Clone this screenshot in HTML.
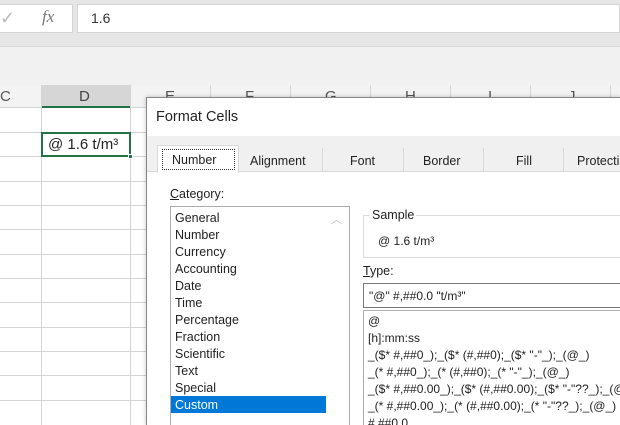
<!DOCTYPE html>
<html><head><style>
*{margin:0;padding:0;box-sizing:border-box}
html,body{width:620px;height:425px;overflow:hidden}
body{background:#fff;font-family:"Liberation Sans",sans-serif;color:#222}
#w{position:relative;width:620px;height:425px;overflow:hidden}
.a{position:absolute}
.t{font-size:12.5px;white-space:nowrap}
</style></head><body><div id="w">
<div class="a" style="left:0;top:0;width:620px;height:46px;background:#e6e6e6"></div>
<div class="a" style="left:0;top:46px;width:620px;height:39px;background:#f1f1f1;border-top:1px solid #d8d8d8"></div>
<div class="a" style="left:0;top:4px;width:73px;height:29px;background:#fff;border:1px solid #d4d4d4;border-left:none"></div>
<div class="a" style="left:0;top:8px;font-size:18px;color:#bbb">✓</div>
<div class="a" style="left:42px;top:7px;font-family:'Liberation Serif',serif;font-style:italic;font-size:17px;color:#777">fx</div>
<div class="a" style="left:77px;top:4px;width:543px;height:29px;background:#fff;border:1px solid #d4d4d4"></div>
<div class="a" style="left:91px;top:10px;font-size:14px;color:#333">1.6</div>
<div class="a" style="left:0;top:85px;width:620px;height:23px;background:#f3f3f3;border-bottom:1px solid #d4d4d4"></div>
<div class="a" style="left:41px;top:85px;width:89px;height:23px;background:#d6d6d6;border-bottom:2px solid #217346"></div>
<div class="a" style="left:0;top:88px;font-size:15px;color:#555">C</div>
<div class="a" style="left:79px;top:88px;font-size:15px;color:#444">D</div>
<div class="a" style="left:165px;top:88px;font-size:15px;color:#555">E</div>
<div class="a" style="left:245px;top:88px;font-size:15px;color:#555">F</div>
<div class="a" style="left:325px;top:88px;font-size:15px;color:#555">G</div>
<div class="a" style="left:405px;top:88px;font-size:15px;color:#555">H</div>
<div class="a" style="left:488px;top:88px;font-size:15px;color:#555">I</div>
<div class="a" style="left:568px;top:88px;font-size:15px;color:#555">J</div>
<div class="a" style="left:41px;top:85px;width:1px;height:340px;background:#d4d4d4"></div>
<div class="a" style="left:130px;top:85px;width:1px;height:340px;background:#d4d4d4"></div>
<div class="a" style="left:210px;top:85px;width:1px;height:12px;background:#d4d4d4"></div>
<div class="a" style="left:290px;top:85px;width:1px;height:12px;background:#d4d4d4"></div>
<div class="a" style="left:370px;top:85px;width:1px;height:12px;background:#d4d4d4"></div>
<div class="a" style="left:450px;top:85px;width:1px;height:12px;background:#d4d4d4"></div>
<div class="a" style="left:530px;top:85px;width:1px;height:12px;background:#d4d4d4"></div>
<div class="a" style="left:610px;top:85px;width:1px;height:12px;background:#d4d4d4"></div>
<div class="a" style="left:0;top:132px;width:146px;height:1px;background:#d4d4d4"></div>
<div class="a" style="left:0;top:156px;width:146px;height:1px;background:#d4d4d4"></div>
<div class="a" style="left:0;top:181px;width:146px;height:1px;background:#d4d4d4"></div>
<div class="a" style="left:0;top:205px;width:146px;height:1px;background:#d4d4d4"></div>
<div class="a" style="left:0;top:229px;width:146px;height:1px;background:#d4d4d4"></div>
<div class="a" style="left:0;top:254px;width:146px;height:1px;background:#d4d4d4"></div>
<div class="a" style="left:0;top:278px;width:146px;height:1px;background:#d4d4d4"></div>
<div class="a" style="left:0;top:302px;width:146px;height:1px;background:#d4d4d4"></div>
<div class="a" style="left:0;top:327px;width:146px;height:1px;background:#d4d4d4"></div>
<div class="a" style="left:0;top:351px;width:146px;height:1px;background:#d4d4d4"></div>
<div class="a" style="left:0;top:375px;width:146px;height:1px;background:#d4d4d4"></div>
<div class="a" style="left:0;top:400px;width:146px;height:1px;background:#d4d4d4"></div>
<div class="a" style="left:41px;top:132px;width:90px;height:25px;border:2px solid #217346;background:#fff"></div>
<div class="a" style="left:128px;top:154px;width:5px;height:5px;background:#217346;border:1px solid #fff"></div>
<div class="a" style="left:48px;top:136px;font-size:15px;color:#222">@ 1.6 t/m³</div>
<div class="a" style="left:146px;top:97px;width:474px;height:328px;background:#fff;border:1px solid #888;border-right:none;border-bottom:none;box-shadow:0 0 4px rgba(0,0,0,.25)"></div>
<div class="a" style="left:156px;top:109px;font-size:14.5px;color:#222">Format Cells</div>
<div class="a" style="left:147px;top:136px;width:473px;height:36px;background:#f0f0f0"></div>
<div class="a" style="left:147px;top:171px;width:473px;height:1px;background:#d9d9d9"></div>
<div class="a" style="left:157px;top:145px;width:82px;height:28px;background:#fff;border:1px solid #d9d9d9;border-bottom:none"></div>
<div class="a" style="left:162px;top:149px;width:73px;height:21px;border:1px dotted #333"></div>
<div class="a t" style="left:172px;top:153px">Number</div>
<div class="a" style="left:322px;top:148px;width:1px;height:23px;background:#d9d9d9"></div>
<div class="a" style="left:403px;top:148px;width:1px;height:23px;background:#d9d9d9"></div>
<div class="a" style="left:483px;top:148px;width:1px;height:23px;background:#d9d9d9"></div>
<div class="a" style="left:563px;top:148px;width:1px;height:23px;background:#d9d9d9"></div>
<div class="a t" style="left:250px;top:154px">Alignment</div>
<div class="a t" style="left:350px;top:154px">Font</div>
<div class="a t" style="left:423px;top:154px">Border</div>
<div class="a t" style="left:516px;top:154px">Fill</div>
<div class="a t" style="left:577px;top:154px;width:43px;overflow:hidden">Protection</div>
<div class="a t" style="left:170px;top:187px"><u>C</u>ategory:</div>
<div class="a" style="left:170px;top:206px;width:180px;height:219px;border:1px solid #adadad;border-bottom:none"></div>
<div class="a" style="left:331px;top:211px;font-size:11px;color:#bbb">︿</div>
<div class="a" style="left:171px;top:396px;width:155px;height:17px;background:#0078d7"></div>
<div class="a t" style="left:175px;top:210px;line-height:17px">General<br>Number<br>Currency<br>Accounting<br>Date<br>Time<br>Percentage<br>Fraction<br>Scientific<br>Text<br>Special<br><span style="color:#fff">Custom</span></div>
<div class="a" style="left:363px;top:215px;width:257px;height:43px;border:1px solid #dcdcdc;border-right:none"></div>
<div class="a t" style="left:370px;top:208px;background:#fff;padding:0 2px">Sample</div>
<div class="a" style="left:378px;top:234px;font-size:12px">@ 1.6 t/m³</div>
<div class="a t" style="left:363px;top:264px"><u>T</u>ype:</div>
<div class="a" style="left:363px;top:283px;width:257px;height:25px;border:1px solid #7a7a7a;border-right:none"></div>
<div class="a" style="left:369px;top:289px;font-size:12px">"@" #,##0.0 "t/m³"</div>
<div class="a" style="left:363px;top:310px;width:257px;height:115px;border:1px solid #adadad;border-right:none;border-bottom:none;overflow:hidden">
<div style="position:absolute;left:4px;top:2px;font-size:12px;line-height:17px;white-space:nowrap">@<br>[h]:mm:ss<br>_($* #,##0_);_($* (#,##0);_($* "-"_);_(@_)<br>_(* #,##0_);_(* (#,##0);_(* "-"_);_(@_)<br>_($* #,##0.00_);_($* (#,##0.00);_($* "-"??_);_(@_)<br>_(* #,##0.00_);_(* (#,##0.00);_(* "-"??_);_(@_)<br>#,##0.0</div></div>
</div></body></html>
